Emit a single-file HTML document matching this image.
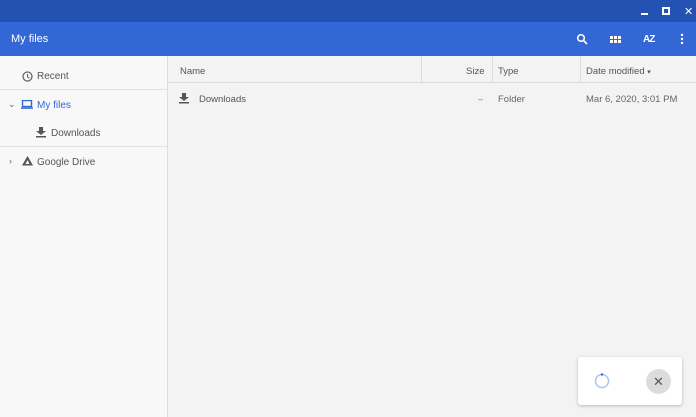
<!DOCTYPE html><html><head><style>
*{margin:0;padding:0;box-sizing:border-box}
body{width:696px;height:417px;overflow:hidden;font-family:"Liberation Sans",sans-serif;background:#f3f3f3;position:relative;font-size:10px;color:#444}
.a{position:absolute}
</style></head><body>
<div class="a" style="left:0;top:0;width:696px;height:22px;background:#2452b2"></div>
<div class="a" style="left:0;top:22px;width:696px;height:34px;background:#3367d6"></div>
<div class="a" style="left:11px;top:33px;color:#fff;font-size:11px">My files</div>
<div class="a" style="left:641px;top:13px;width:7px;height:2px;background:#fff"></div>
<div class="a" style="left:662px;top:7px;width:8px;height:8px;border:2px solid #fff"></div>
<div class="a" style="left:684px;top:5px;color:#fff;font-size:11px">✕</div>
<svg class="a" style="left:576px;top:33px" width="12" height="12" viewBox="0 0 12 12"><circle cx="5" cy="5" r="3.3" fill="none" stroke="#fff" stroke-width="1.5"/><path d="M7.5 7.5L11 11" stroke="#fff" stroke-width="1.6"/></svg>
<svg class="a" style="left:610px;top:36px" width="11" height="7"><g fill="#fff"><rect x="0" y="0" width="3" height="3"/><rect x="4" y="0" width="3" height="3"/><rect x="8" y="0" width="3" height="3"/><rect x="0" y="4" width="3" height="3"/><rect x="4" y="4" width="3" height="3"/><rect x="8" y="4" width="3" height="3"/></g></svg>
<div class="a" style="left:643px;top:34px;color:#fff;font-size:10px;font-weight:bold;letter-spacing:-1px">AZ</div>
<svg class="a" style="left:680px;top:33px" width="4" height="12"><g fill="#fff"><circle cx="2" cy="2" r="1.2"/><circle cx="2" cy="6" r="1.2"/><circle cx="2" cy="10" r="1.2"/></g></svg>
<div class="a" style="left:0;top:56px;width:168px;height:361px;background:#f8f8f8;border-right:1px solid #ddd"></div>
<div class="a" style="left:0;top:89px;width:167px;height:1px;background:#e2e2e2"></div>
<div class="a" style="left:0;top:146px;width:167px;height:1px;background:#e2e2e2"></div>
<svg class="a" style="left:22px;top:71px" width="11" height="11"><circle cx="5.5" cy="5.5" r="4.5" fill="none" stroke="#666" stroke-width="1.3"/><path d="M5.5 3v3l2 1.2" fill="none" stroke="#666" stroke-width="1.1"/></svg>
<div class="a" style="left:37px;top:71px;color:#555">Recent</div>
<div class="a" style="left:8px;top:99px;color:#3367d6;font-size:9px">⌄</div>
<svg class="a" style="left:21px;top:100px" width="12" height="9"><rect x="1.5" y="0.5" width="9" height="6" fill="none" stroke="#3367d6" stroke-width="1.4"/><rect x="0" y="7.3" width="12" height="1.5" fill="#3367d6"/></svg>
<div class="a" style="left:37px;top:100px;color:#3367d6">My files</div>
<svg class="a" style="left:36px;top:127px" width="10" height="11"><path d="M3 0h4v4h3L5 8 0 4h3z M0 9h10v1.5H0z" fill="#555"/></svg>
<div class="a" style="left:51px;top:128px;color:#555">Downloads</div>
<div class="a" style="left:9px;top:156px;color:#666;font-size:9px">›</div>
<svg class="a" style="left:22px;top:156px" width="11" height="10"><path d="M5.5 0L11 9.5H0z" fill="#555"/><path d="M5.5 4L7.5 8h-4z" fill="#f8f8f8"/></svg>
<div class="a" style="left:37px;top:157px;color:#555">Google Drive</div>
<div class="a" style="left:168px;top:56px;width:528px;height:27px;border-bottom:1px solid #ddd"></div>
<div class="a" style="left:421px;top:56px;width:1px;height:27px;background:#ddd"></div>
<div class="a" style="left:492px;top:56px;width:1px;height:27px;background:#ddd"></div>
<div class="a" style="left:580px;top:56px;width:1px;height:27px;background:#ddd"></div>
<div class="a" style="left:180px;top:66px;color:#555;font-size:9.5px">Name</div>
<div class="a" style="left:466px;top:66px;color:#555;font-size:9.5px">Size</div>
<div class="a" style="left:498px;top:66px;color:#555;font-size:9.5px">Type</div>
<div class="a" style="left:586px;top:66px;color:#555;font-size:9.5px">Date modified <span style="font-size:7px">▾</span></div>
<svg class="a" style="left:179px;top:93px" width="10" height="11"><path d="M3 0h4v4h3L5 8 0 4h3z M0 9h10v1.5H0z" fill="#555"/></svg>
<div class="a" style="left:199px;top:94px;color:#555;font-size:9.5px">Downloads</div>
<div class="a" style="left:478px;top:94px;color:#777;font-size:9px">–</div>
<div class="a" style="left:498px;top:94px;color:#666;font-size:9.5px">Folder</div>
<div class="a" style="left:586px;top:94px;color:#666;font-size:9.5px">Mar 6, 2020, 3:01 PM</div>
<div class="a" style="left:578px;top:357px;width:104px;height:48px;background:#fff;border-radius:3px;box-shadow:0 1px 3px rgba(0,0,0,.25)"></div>
<svg class="a" style="left:594px;top:373px" width="16" height="16"><circle cx="8" cy="8" r="6.5" fill="none" stroke="#a8c4f4" stroke-width="1.5"/><circle cx="8" cy="1.5" r="1.2" fill="#3367d6"/></svg>
<div class="a" style="left:646px;top:369px;width:25px;height:25px;border-radius:50%;background:#dcdcdc;color:#555;text-align:center;line-height:25px;font-size:13px">✕</div>
</body></html>
